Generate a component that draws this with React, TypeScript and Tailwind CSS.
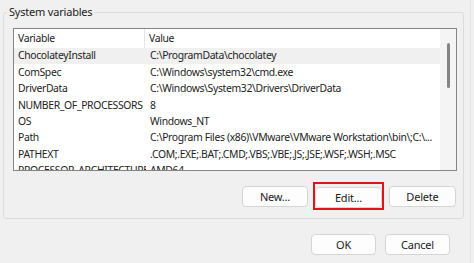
const rows: [string, string][] = [
  ['ChocolateyInstall', 'C:\\ProgramData\\chocolatey'],
  ['ComSpec', 'C:\\Windows\\system32\\cmd.exe'],
  ['DriverData', 'C:\\Windows\\System32\\Drivers\\DriverData'],
  ['NUMBER_OF_PROCESSORS', '8'],
  ['OS', 'Windows_NT'],
  ['Path', 'C:\\Program Files (x86)\\VMware\\VMware Workstation\\bin\\;C:\\...'],
  ['PATHEXT', '.COM;.EXE;.BAT;.CMD;.VBS;.VBE;.JS;.JSE;.WSF;.WSH;.MSC'],
  ['PROCESSOR_ARCHITECTURE', 'AMD64'],
];

const Btn = ({ label, w = 'w-[66px]' }: { label: string; w?: string }) => (
  <button className={`${w} h-[21px] bg-[#fdfdfd] border border-[#d5d5d5] rounded-[4px] text-[11px] tracking-[-0.2px] text-[#1b1b1b] leading-none`}>
    {label}
  </button>
);

const App = () => {
  return (
    <div
      className="w-[474px] h-[263px] bg-[#f0f0f0] overflow-hidden text-[#222]"
      style={{ fontFamily: '"Noto Sans", "Open Sans", sans-serif' }}
    >
      <div className="w-[471px] h-[263px] border-r border-[#e2e2e2] pt-[4px]">
        {/* System variables group */}
        <fieldset className="ml-[3px] w-[461px] h-[215px] border border-[#dcdcdc] rounded-[3px] p-0">
          <legend className="ml-[3px] px-[2px] text-[11px] tracking-[-0.2px] leading-[16px]">System variables</legend>

          <div className="ml-[9px] mt-[8px] w-[444px] h-[143px] border border-[#858585] bg-white flex overflow-hidden">
            <div className="flex-1 min-w-0 flex flex-col text-[10.4px] tracking-[-0.35px]">
              <div className="h-[19px] shrink-0 flex items-center">
                <div className="w-[131px] pl-[4px] border-r border-[#e5e5e5] h-full flex items-center">Variable</div>
                <div className="pl-[4px]">Value</div>
              </div>
              {rows.map(([name, value], i) => (
                <div
                  key={name}
                  className={`h-[16.4px] shrink-0 flex items-center whitespace-nowrap ${i === 0 ? 'bg-[#f0f0f0]' : ''}`}
                >
                  <div className="w-[132px] shrink-0 pl-[4px] overflow-hidden">{name}</div>
                  <div className="pl-[4px]">{value}</div>
                </div>
              ))}
            </div>
            {/* scrollbar */}
            <div className="w-[16px] shrink-0 bg-[#f4f4f4] pt-[14px] flex justify-center">
              <div className="w-[3px] h-[45px] bg-[#858585] rounded-full" />
            </div>
          </div>

          <div className="mt-[11px] mr-[7px] flex justify-end items-center gap-[5px]">
            <Btn label="New..." />
            <div className="border-2 border-[#e0151b]">
              <Btn label="Edit..." w="w-[67px]" />
            </div>
            <Btn label="Delete" w="w-[67px]" />
          </div>
        </fieldset>

        <div className="mt-[15px] mr-[20px] flex justify-end gap-[9px]">
          <Btn label="OK" w="w-[65px]" />
          <Btn label="Cancel" w="w-[65px]" />
        </div>
      </div>
    </div>
  );
};

export default App;
